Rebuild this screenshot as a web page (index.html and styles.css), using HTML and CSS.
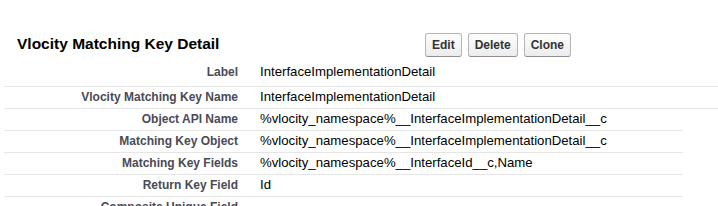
FILE: index.html
```html
<!DOCTYPE html>
<html lang="en">
<head>
  <meta charset="UTF-8" />
  <title>Vlocity Matching Key Detail</title>
  <link rel="stylesheet" href="styles.css">
</head>
<body>
  <div class="detail-header">
    <h2 class="detail-title">Vlocity Matching Key Detail</h2>
    <div class="btn-group">
      <button class="btn">Edit</button>
      <button class="btn">Delete</button>
      <button class="btn">Clone</button>
    </div>
  </div>

  <div class="detail-list">
    <div class="detail-row first">
      <div class="label-col">Label</div>
      <div class="data-col">InterfaceImplementationDetail</div>
    </div>
    <div class="detail-row">
      <div class="label-col">Vlocity Matching Key Name</div>
      <div class="data-col">InterfaceImplementationDetail</div>
    </div>
    <div class="detail-row short">
      <div class="label-col">Object API Name</div>
      <div class="data-col">%vlocity_namespace%__InterfaceImplementationDetail__c</div>
    </div>
    <div class="detail-row short">
      <div class="label-col">Matching Key Object</div>
      <div class="data-col">%vlocity_namespace%__InterfaceImplementationDetail__c</div>
    </div>
    <div class="detail-row short">
      <div class="label-col">Matching Key Fields</div>
      <div class="data-col">%vlocity_namespace%__InterfaceId__c,Name</div>
    </div>
    <div class="detail-row short">
      <div class="label-col">Return Key Field</div>
      <div class="data-col">Id</div>
    </div>
    <div class="detail-row short">
      <div class="label-col">Composite Unique Field</div>
      <div class="data-col"></div>
    </div>
  </div>
</body>
</html>
```

FILE: styles.css
```css
body {
  margin: 0;
  font-family: "Liberation Sans", Arial, sans-serif;
  font-size: 12px;
  color: #000;
  background: #fff;
}
.detail-header {
  display: flex;
  align-items: flex-start;
  padding: 33px 0 5px 0;
}
.detail-title {
  flex: 0 0 408px;
  margin: 1px 0 0 0;
  padding-left: 17px;
  font-size: 15.5px;
  line-height: 20px;
  font-weight: bold;
  color: #000;
}
.btn-group {
  display: flex;
  gap: 6px;
}
.btn {
  height: 24px;
  padding: 0 6px;
  font-family: "Liberation Sans", Arial, sans-serif;
  font-size: 12px;
  font-weight: bold;
  color: #333;
  background: linear-gradient(#fdfdfd, #ececec);
  border: 1px solid #b5b5b5;
  border-bottom-color: #8f8f8f;
  border-radius: 3px;
}
.detail-list {
  margin-left: 4px;
}
.detail-row {
  display: flex;
  padding: 3px 0 4px 0;
  line-height: 14px;
  border-bottom: 1px solid #e6e6e6;
}
.detail-row.first {
  padding-bottom: 7px;
}
.detail-row.short {
  margin-right: 35px;
}
.label-col {
  flex: 0 0 234px;
  padding-right: 10px;
  text-align: right;
  font-weight: bold;
  color: #4a4a56;
}
.data-col {
  padding-left: 12px;
  font-size: 13.2px;
}
```
